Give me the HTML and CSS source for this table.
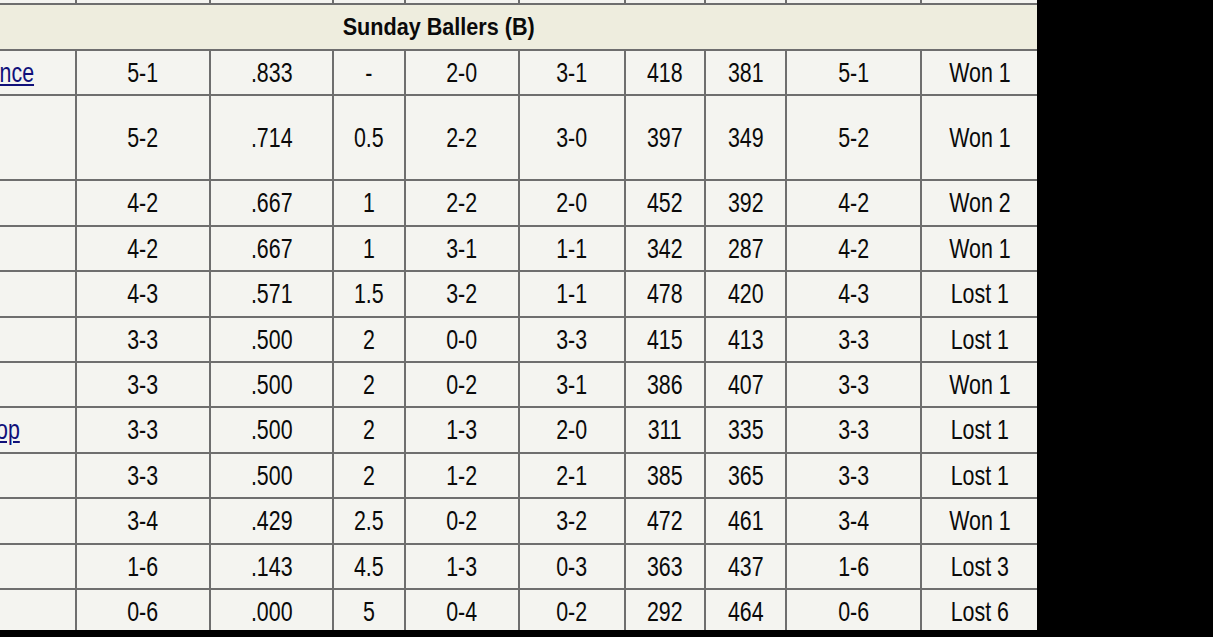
FILE: index.html
```html
<!DOCTYPE html>
<html lang="en">
<head>
<meta charset="utf-8">
<title>Standings - Sunday Ballers (B)</title>
<link rel="stylesheet" href="styles.css">
</head>
<body>
<div class="page">
  <table class="standings">
    <colgroup>
      <col class="c-team"><col class="c-rec"><col class="c-pct"><col class="c-gb"><col class="c-home"><col class="c-away"><col class="c-pf"><col class="c-pa"><col class="c-div"><col class="c-strk">
    </colgroup>
    <tbody>
      <tr class="prev">
        <td></td><td></td><td></td><td></td><td></td><td></td><td></td><td></td><td></td><td></td>
      </tr>
      <tr class="division">
        <th colspan="10"><span class="h">Sunday Ballers (B)</span></th>
      </tr>
      <tr><td class="team"><span class="t"><a href="#">Peak Performance</a></span></td><td><span class="t">5-1</span></td><td><span class="t">.833</span></td><td><span class="t">-</span></td><td><span class="t">2-0</span></td><td><span class="t">3-1</span></td><td><span class="t">418</span></td><td><span class="t">381</span></td><td><span class="t">5-1</span></td><td><span class="t">Won 1</span></td></tr>
      <tr><td class="team"><span class="t">Shooting Stars<br>Club</span></td><td><span class="t">5-2</span></td><td><span class="t">.714</span></td><td><span class="t">0.5</span></td><td><span class="t">2-2</span></td><td><span class="t">3-0</span></td><td><span class="t">397</span></td><td><span class="t">349</span></td><td><span class="t">5-2</span></td><td><span class="t">Won 1</span></td></tr>
      <tr><td class="team"><span class="t">Fast Break</span></td><td><span class="t">4-2</span></td><td><span class="t">.667</span></td><td><span class="t">1</span></td><td><span class="t">2-2</span></td><td><span class="t">2-0</span></td><td><span class="t">452</span></td><td><span class="t">392</span></td><td><span class="t">4-2</span></td><td><span class="t">Won 2</span></td></tr>
      <tr><td class="team"><span class="t">Bench Mob</span></td><td><span class="t">4-2</span></td><td><span class="t">.667</span></td><td><span class="t">1</span></td><td><span class="t">3-1</span></td><td><span class="t">1-1</span></td><td><span class="t">342</span></td><td><span class="t">287</span></td><td><span class="t">4-2</span></td><td><span class="t">Won 1</span></td></tr>
      <tr><td class="team"><span class="t">Rim Rockers</span></td><td><span class="t">4-3</span></td><td><span class="t">.571</span></td><td><span class="t">1.5</span></td><td><span class="t">3-2</span></td><td><span class="t">1-1</span></td><td><span class="t">478</span></td><td><span class="t">420</span></td><td><span class="t">4-3</span></td><td><span class="t">Lost 1</span></td></tr>
      <tr><td class="team"><span class="t">Ballers</span></td><td><span class="t">3-3</span></td><td><span class="t">.500</span></td><td><span class="t">2</span></td><td><span class="t">0-0</span></td><td><span class="t">3-3</span></td><td><span class="t">415</span></td><td><span class="t">413</span></td><td><span class="t">3-3</span></td><td><span class="t">Lost 1</span></td></tr>
      <tr><td class="team"><span class="t">Air Raid</span></td><td><span class="t">3-3</span></td><td><span class="t">.500</span></td><td><span class="t">2</span></td><td><span class="t">0-2</span></td><td><span class="t">3-1</span></td><td><span class="t">386</span></td><td><span class="t">407</span></td><td><span class="t">3-3</span></td><td><span class="t">Won 1</span></td></tr>
      <tr><td class="team"><span class="t"><a href="#">The Barber Shop</a></span></td><td><span class="t">3-3</span></td><td><span class="t">.500</span></td><td><span class="t">2</span></td><td><span class="t">1-3</span></td><td><span class="t">2-0</span></td><td><span class="t">311</span></td><td><span class="t">335</span></td><td><span class="t">3-3</span></td><td><span class="t">Lost 1</span></td></tr>
      <tr><td class="team"><span class="t">Swish</span></td><td><span class="t">3-3</span></td><td><span class="t">.500</span></td><td><span class="t">2</span></td><td><span class="t">1-2</span></td><td><span class="t">2-1</span></td><td><span class="t">385</span></td><td><span class="t">365</span></td><td><span class="t">3-3</span></td><td><span class="t">Lost 1</span></td></tr>
      <tr><td class="team"><span class="t">Dunk Tank</span></td><td><span class="t">3-4</span></td><td><span class="t">.429</span></td><td><span class="t">2.5</span></td><td><span class="t">0-2</span></td><td><span class="t">3-2</span></td><td><span class="t">472</span></td><td><span class="t">461</span></td><td><span class="t">3-4</span></td><td><span class="t">Won 1</span></td></tr>
      <tr><td class="team"><span class="t">Brick City</span></td><td><span class="t">1-6</span></td><td><span class="t">.143</span></td><td><span class="t">4.5</span></td><td><span class="t">1-3</span></td><td><span class="t">0-3</span></td><td><span class="t">363</span></td><td><span class="t">437</span></td><td><span class="t">1-6</span></td><td><span class="t">Lost 3</span></td></tr>
      <tr><td class="team"><span class="t">Airballs</span></td><td><span class="t">0-6</span></td><td><span class="t">.000</span></td><td><span class="t">5</span></td><td><span class="t">0-4</span></td><td><span class="t">0-2</span></td><td><span class="t">292</span></td><td><span class="t">464</span></td><td><span class="t">0-6</span></td><td><span class="t">Lost 6</span></td></tr>
    </tbody>
  </table>
</div>
</body>
</html>
```

FILE: styles.css
```css
html, body {
  margin: 0;
  padding: 0;
  background: #000;
  overflow: hidden;
}

.page {
  margin-left: -162px;
  margin-top: -42px;
  width: 1199px;
  height: 672px;
  overflow: hidden;
}

.standings {
  border-collapse: collapse;
  table-layout: fixed;
  width: 1199px;
  font-family: "Liberation Sans", Arial, sans-serif;
  font-size: 28.5px;
  color: #0a0a0a;
  background: #f4f4f0;
}

.c-team { width: 237px; }
.c-rec { width: 134px; }
.c-pct { width: 123px; }
.c-gb { width: 72px; }
.c-home { width: 114px; }
.c-away { width: 106px; }
.c-pf { width: 80px; }
.c-pa { width: 81px; }
.c-div { width: 135px; }
.c-strk { width: 117px; }

.standings td,
.standings th {
  border: 2px solid #6e6e6e;
  padding: 2px 4px;
  line-height: 39.44px;
  height: 39.44px;
  text-align: center;
  vertical-align: middle;
  white-space: nowrap;
}

.standings td:last-child,
.standings th {
  border-right: 0;
}

.t {
  display: inline-block;
  vertical-align: top;
  transform: scaleX(0.75);
}

.standings td.team {
  text-align: left;
  padding-left: 17px;
}

.team .t {
  transform-origin: left center;
}

.standings a {
  color: #10107a;
  text-decoration: underline;
}

.division th {
  background: #eeedde;
  font-weight: bold;
  font-size: 24px;
}

.h {
  display: inline-block;
  vertical-align: top;
  transform: scaleX(0.9);
}
```
